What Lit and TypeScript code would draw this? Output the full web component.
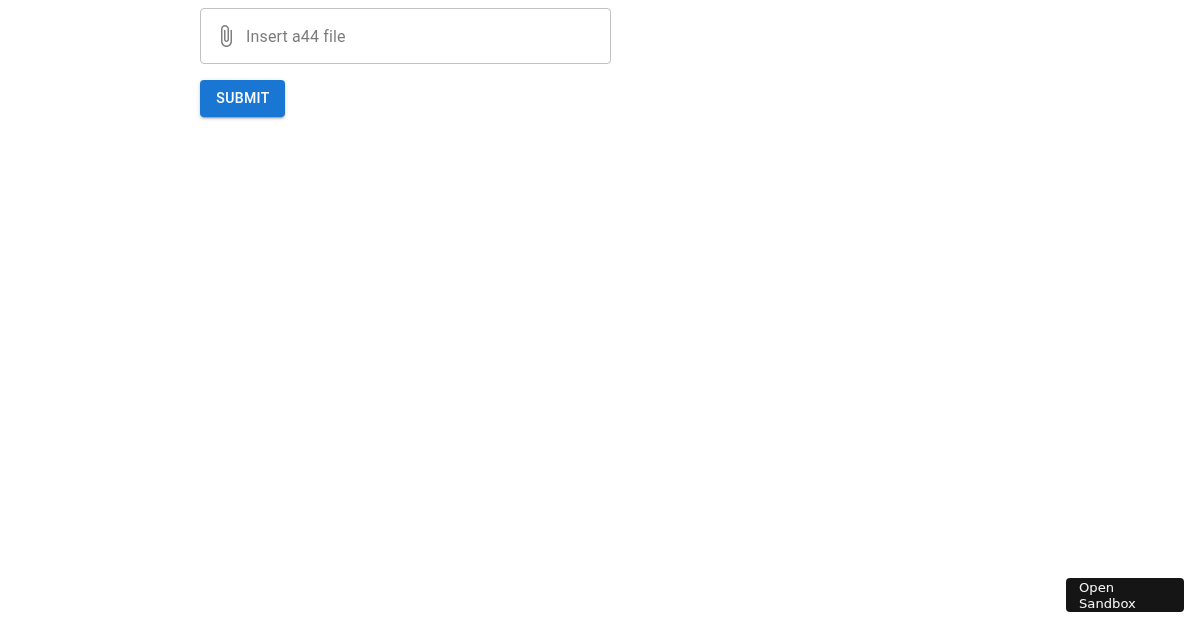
import { LitElement, html, css } from "lit";
import { customElement } from "lit/decorators.js";

@customElement("app-root")
export class AppRoot extends LitElement {
  static styles = css`
    :host {
      display: block;
      position: relative;
      height: 630px;
      background: #fff;
      font-family: Roboto, "Liberation Sans", sans-serif;
      overflow: hidden;
    }
    .form {
      display: flex;
      flex-direction: column;
      align-items: flex-start;
      gap: 16px;
      padding: 8px 0 0 200px;
    }
    .field {
      box-sizing: border-box;
      width: 411px;
      height: 56px;
      display: flex;
      align-items: center;
      gap: 8px;
      padding: 0 13px;
      border: 1px solid rgba(0, 0, 0, 0.24);
      border-radius: 4px;
    }
    .field svg {
      width: 24px;
      height: 24px;
      fill: rgba(0, 0, 0, 0.5);
      flex: none;
    }
    .placeholder {
      font-size: 16px;
      letter-spacing: 0.15px;
      color: rgba(0, 0, 0, 0.52);
      will-change: transform;
    }
    .submit {
      box-sizing: border-box;
      height: 37px;
      width: 85px;
      padding: 0 0 1px 1px;
      border: 0;
      border-radius: 4px;
      background: #1976d2;
      box-shadow: 0 3px 1px -2px rgba(0, 0, 0, 0.2),
        0 2px 2px 0 rgba(0, 0, 0, 0.14), 0 1px 5px 0 rgba(0, 0, 0, 0.12);
    }
    .submit span {
      display: block;
      color: #fff;
      font: 500 14px/24px Roboto, "Liberation Sans", sans-serif;
      letter-spacing: 0.4px;
      text-transform: uppercase;
      will-change: transform;
    }
    .sandbox {
      position: absolute;
      left: 1066px;
      top: 578px;
      box-sizing: border-box;
      width: 118px;
      height: 34px;
      padding: 2px 13px 0;
      border-radius: 4px;
      background: #151515;
      color: #f4f4f4;
      font: 13.15px/16px "DejaVu Sans", sans-serif;
      will-change: transform;
    }
  `;

  render() {
    return html`
      <div class="form">
        <div class="field">
          <svg viewBox="0 0 24 24" aria-hidden="true">
            <path
              d="M16.5 6v11.5c0 2.21-1.79 4-4 4s-4-1.79-4-4V5c0-1.38 1.12-2.5 2.5-2.5s2.5 1.12 2.5 2.5v10.5c0 .55-.45 1-1 1s-1-.45-1-1V6H10v9.5c0 1.38 1.12 2.5 2.5 2.5s2.5-1.12 2.5-2.5V5c0-2.21-1.79-4-4-4S7 2.79 7 5v12.5c0 3.04 2.46 5.5 5.5 5.5s5.5-2.46 5.5-5.5V6h-1.5z"
            ></path>
          </svg>
          <span class="placeholder">Insert a44 file</span>
        </div>
        <button class="submit"><span>Submit</span></button>
      </div>
      <div class="sandbox">Open Sandbox</div>
    `;
  }
}
